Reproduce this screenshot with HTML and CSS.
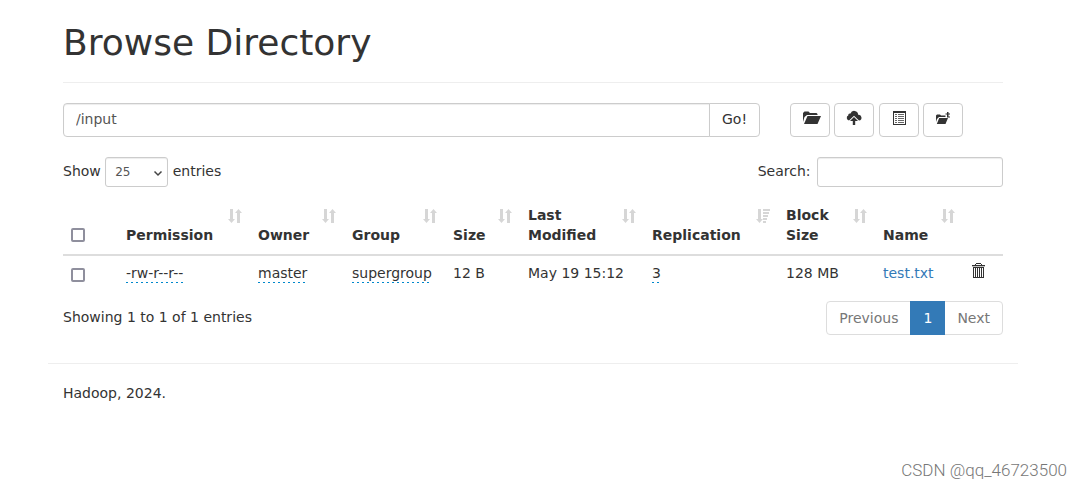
FILE: index.html
```html
<!DOCTYPE html>
<html lang="en">
<head>
	<meta charset="UTF-8">
	<meta name="viewport" content="width=device-width, initial-scale=1.0">
	<title>Browsing HDFS</title>
	<link rel="stylesheet" href="styles.css">
</head>
<body>
	<svg class="sprite" aria-hidden="true">
		<symbol id="sort" viewBox="0 0 14 14">
			<path d="M2 0h3v10h2L3.500 14 0 10h2zM9 14V4H7l3.500-4L14 4h-2v10z"/>
		</symbol>
		<symbol id="sort-desc" viewBox="0 0 14 14">
			<path d="M2 0h3v10h2L3.500 14 0 10h2zM7 0h7v2H7zM7 3h6v2H7zM7 6h5v2H7zM7 9h4v2H7zM7 12h3v2H7z"/>
		</symbol>
	</svg>

	<div class="container">
		<div class="page-header">
			<h1>Browse Directory</h1>
		</div>

		<div class="toolbar">
			<form class="input-group">
				<input type="text" class="form-control" id="directory" aria-label="Directory" value="/input">
				<button type="button" class="btn btn-go">Go!</button>
			</form>
			<div class="actions">
				<button type="button" class="btn" aria-label="Create directory">
					<svg class="icon" width="14" height="14" viewBox="0 0 14 14"><path d="M0 11V2l1.500-1.500h4L7 2h6.500l1 1v1H4L1.500 6z"/><path d="M4.500 5H18l-3.500 8H1z"/></svg>
				</button>
				<button type="button" class="btn" aria-label="Upload files">
					<svg class="icon" width="14" height="14" viewBox="0 0 14 14"><path d="M2 9.500A2.600 2.600 0 0 1 1.200 4.600 2 2 0 0 1 3.500 2.500a3.900 3.900 0 0 1 7.600 1.200A2.900 2.900 0 0 1 12 9.500L7 4.700z"/><path d="M7 6l4 4H8.200v4H5.800v-4H3z"/></svg>
				</button>
				<button type="button" class="btn" aria-label="Parent listing">
					<svg class="icon" width="14" height="14" viewBox="0 0 14 14"><path fill-rule="evenodd" d="M1 0h13v14H1zM2 2v11h11V2z"/><path d="M3 3h2v1H3zM6 3h6v1H6zM3 5h2v1H3zM6 5h6v1H6zM3 7h2v1H3zM6 7h6v1H6zM3 9h2v1H3zM6 9h6v1H6zM3 11h2v1H3zM6 11h6v1H6z" opacity=".75"/></svg>
				</button>
				<button type="button" class="btn" aria-label="Cut and paste">
					<svg class="icon" width="14" height="14" viewBox="0 0 14 14"><path d="M0 11V4.500L1 3.500h3l1 1h4.500v1.500H3L1 8z"/><path d="M3.200 7H12l-2.500 6H.800z"/><path d="M11 1h1.500v1.500H14v1h-1.500v2H14v1h-3v-3H9.500v-1H11z"/></svg>
				</button>
			</div>
		</div>

		<div class="controls">
			<div>
				<label for="length">Show</label>
				<span class="select-wrap">
					<select class="form-control input-sm" id="length">
						<option>10</option>
						<option selected>25</option>
						<option>50</option>
						<option>100</option>
					</select>
					<svg class="chevron" viewBox="0 0 8 5"><path d="M.5.5L4 4 7.500.5"/></svg>
				</span>
				<label for="length">entries</label>
			</div>
			<div class="filter">
				<label for="search">Search:</label>
				<input type="search" class="form-control input-sm" id="search">
			</div>
		</div>

		<table class="table">
			<colgroup>
				<col class="c-check">
				<col class="c-permission">
				<col class="c-owner">
				<col class="c-group">
				<col class="c-size">
				<col class="c-modified">
				<col class="c-replication">
				<col class="c-block">
				<col class="c-name">
				<col class="c-trash">
			</colgroup>
			<thead>
				<tr>
					<th><input type="checkbox" aria-label="Select all"></th>
					<th>Permission<svg class="sort"><use href="#sort"/></svg></th>
					<th>Owner<svg class="sort"><use href="#sort"/></svg></th>
					<th>Group<svg class="sort"><use href="#sort"/></svg></th>
					<th>Size<svg class="sort"><use href="#sort"/></svg></th>
					<th>Last Modified<svg class="sort"><use href="#sort"/></svg></th>
					<th>Replication<svg class="sort"><use href="#sort-desc"/></svg></th>
					<th>Block Size<svg class="sort"><use href="#sort"/></svg></th>
					<th>Name<svg class="sort"><use href="#sort"/></svg></th>
					<th></th>
				</tr>
			</thead>
			<tbody>
				<tr>
					<td><input type="checkbox" aria-label="Select test.txt"></td>
					<td><span class="editable">-rw-r--r--</span></td>
					<td><span class="editable">master</span></td>
					<td><span class="editable">supergroup</span></td>
					<td>12 B</td>
					<td>May 19 15:12</td>
					<td><span class="editable">3</span></td>
					<td>128 MB</td>
					<td><a href="#">test.txt</a></td>
					<td>
						<button type="button" class="trash" aria-label="Delete">
							<svg class="icon" width="14" height="16" viewBox="0 0 14 16"><path fill-rule="evenodd" d="M4 2V1h1V0h5v1h1v1h3v1H1V2zM5 1v1h5V1z"/><path d="M1 3h13v1H1z" opacity=".3"/><path fill-rule="evenodd" d="M2 4h11v11H2zM3 5v9h1V5zM5 5v9h1V5zM7 5v9h1V5zM9 5v9h1V5zM11 5v9h1V5z"/></svg>
						</button>
					</td>
				</tr>
			</tbody>
		</table>

		<div class="table-footer">
			<div class="info">Showing 1 to 1 of 1 entries</div>
			<ul class="pagination">
				<li><a href="#">Previous</a></li>
				<li class="active"><a href="#">1</a></li>
				<li><a href="#">Next</a></li>
			</ul>
		</div>

		<hr>

		<footer>Hadoop, 2024.</footer>
	</div>

	<div class="watermark">CSDN @qq_46723500</div>
</body>
</html>
```
FILE: styles.css
```css
* {
	box-sizing: border-box;
}
body {
	margin: 0;
	padding-right: 16px;
	font-family: "DejaVu Sans", sans-serif;
	font-size: 14px;
	line-height: 20px;
	color: #333;
	background-color: #fff;
}
a {
	color: #337ab7;
	text-decoration: none;
}
button, input, select {
	font-family: inherit;
	font-size: inherit;
	line-height: inherit;
}
.sprite {
	display: none;
}
.container {
	max-width: 970px;
	margin: 0 auto;
	padding: 0 15px;
}

.page-header {
	padding: 23px 0 9px;
	margin-bottom: 20px;
	border-bottom: 1px solid #eee;
}
.page-header h1 {
	margin: 0 0 10px;
	font-size: 36px;
	font-weight: 500;
	line-height: 40px;
}

.toolbar {
	display: flex;
	gap: 30px;
	margin-bottom: 20px;
}
.input-group {
	display: flex;
	flex: 1;
}
.actions {
	width: 213px;
}
.form-control {
	height: 34px;
	padding: 5px 12px 7px;
	color: #555;
	background-color: #fff;
	border: 1px solid #ccc;
	border-radius: 4px;
	box-shadow: inset 0 1px 1px rgba(0, 0, 0, .075);
}
.input-group .form-control {
	flex: 1;
	min-width: 0;
	border-radius: 4px 0 0 4px;
}
.btn {
	height: 34px;
	padding: 5px 12px 7px;
	color: #333;
	background-color: #fff;
	border: 1px solid #ccc;
	border-radius: 4px;
	cursor: pointer;
}
.btn-go {
	margin-left: -1px;
	border-radius: 0 4px 4px 0;
}
.actions .btn {
	width: 40px;
	padding: 5px 0 7px;
	vertical-align: top;
}
.icon {
	fill: #333;
	overflow: visible;
	vertical-align: -1px;
}

.controls {
	display: flex;
	justify-content: space-between;
	margin-bottom: 11px;
}
.controls label {
	display: inline-block;
	padding-bottom: 2px;
	vertical-align: middle;
}
.input-sm {
	height: 30px;
	padding: 5px 10px;
	font-size: 12px;
	border-radius: 3px;
	vertical-align: middle;
}
.select-wrap {
	position: relative;
	display: inline-block;
	vertical-align: middle;
}
select.input-sm {
	width: 63px;
	padding: 4px 9px;
	appearance: none;
}
.chevron {
	position: absolute;
	top: 14px;
	right: 6px;
	width: 8px;
	height: 5px;
	overflow: visible;
	fill: none;
	stroke: #444;
	stroke-width: 1.5;
	pointer-events: none;
}
.filter .input-sm {
	width: 186px;
	margin-left: 2px;
}

.table {
	width: 100%;
	table-layout: fixed;
	border-collapse: collapse;
}
.c-check { width: 55px; }
.c-permission { width: 132px; }
.c-owner { width: 94px; }
.c-group { width: 101px; }
.c-size { width: 75px; }
.c-modified { width: 124px; }
.c-replication { width: 134px; }
.c-block { width: 97px; }
.c-name { width: 88px; }
.c-trash { width: 40px; }
.table th, .table td {
	padding: 7px 8px;
	text-align: left;
}
.table th {
	position: relative;
	padding-right: 30px;
	padding-bottom: 9px;
	vertical-align: bottom;
	border-bottom: 2px solid #ddd;
}
.table td {
	vertical-align: top;
	white-space: nowrap;
}
.sort {
	position: absolute;
	top: 11px;
	right: 8px;
	width: 14px;
	height: 14px;
	fill: #d6d6d6;
}
input[type="checkbox"] {
	width: 14px;
	height: 14px;
	margin: 4px 0 0;
	vertical-align: -2px;
	appearance: none;
	background-color: #fff;
	border: 2px solid #8f8f9d;
	border-radius: 2px;
}
td input[type="checkbox"] {
	margin-top: 5px;
	vertical-align: -3px;
}
input[type="checkbox"]:checked {
	background-color: #337ab7;
}
/* dotted rule under the values that can be edited */
.editable {
	display: inline-block;
	height: 20px;
	background: repeating-linear-gradient(to right, #08c 0 2px, transparent 2px 5px) left bottom / 100% 1px no-repeat;
}
.trash {
	padding: 0;
	background: none;
	border: 0;
	cursor: pointer;
}
.trash .icon {
	vertical-align: top;
}

.table-footer {
	display: flex;
	justify-content: space-between;
	margin-top: 10px;
}
.info {
	padding-top: 6px;
}
.pagination {
	display: flex;
	margin: 0;
	padding: 0;
	list-style: none;
}
.pagination a {
	display: block;
	margin-left: -1px;
	padding: 6px 12px;
	color: #777;
	border: 1px solid #ddd;
}
.pagination li:first-child a {
	border-radius: 4px 0 0 4px;
}
.pagination li:last-child a {
	border-radius: 0 4px 4px 0;
}
.pagination .active a {
	position: relative;
	color: #fff;
	background-color: #337ab7;
	border-color: #337ab7;
}

hr {
	margin: 28px -15px 19px;
	border: 0;
	border-top: 1px solid #eee;
}
.watermark {
	position: absolute;
	right: 15px;
	bottom: 7px;
	font-family: Roboto, "Liberation Sans", sans-serif;
	font-size: 17px;
	font-weight: 300;
	color: #777;
}
```
